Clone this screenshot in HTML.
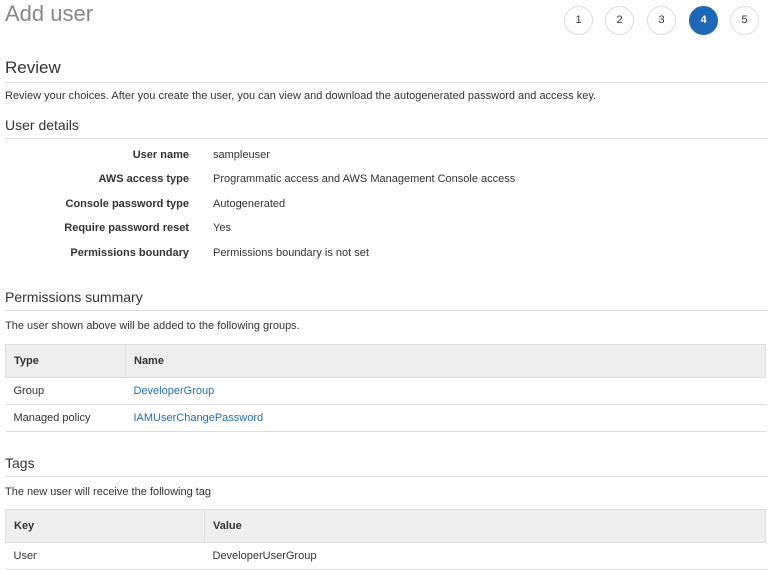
<!DOCTYPE html><html><head><style>
body{margin:0;width:768px;height:563px;overflow:hidden;background:#fff;font-family:"Liberation Sans",Arial,sans-serif;color:#333;position:relative}
.a{position:absolute;white-space:nowrap}
.h{font-size:17px;color:#333}
.ln{position:absolute;left:5px;right:0;height:1px;background:#ddd}
.t{font-size:11px}
.c{position:absolute;top:6px;width:27px;height:27px;border:1px solid #ddd;border-radius:50%;text-align:center;line-height:27px;font-size:11px;color:#333;background:#fff}
.lab{position:absolute;right:579px;font-size:11px;font-weight:bold;white-space:nowrap}
.val{position:absolute;left:213px;font-size:11px;white-space:nowrap}
table{position:absolute;left:5px;width:761px;border-collapse:collapse;font-size:11px}
th{background:#eee;text-align:left;font-weight:bold;padding:0 8px;height:32px;border:1px solid #ddd}
th+th{border-left:1px solid #ddd}
td{padding:0 8px;height:26px;border-bottom:1px solid #ddd}
a{color:#1f6fb2;text-decoration:none}
</style></head><body>
<div class="a" style="left:5px;top:1px;font-size:22px;color:#888">Add user</div>
<div class="c" style="left:564px">1</div>
<div class="c" style="left:605px">2</div>
<div class="c" style="left:647px">3</div>
<div class="c" style="left:689px;background:#1f68b7;border-color:#1f68b7;color:#fff;font-weight:bold">4</div>
<div class="c" style="left:730px">5</div>
<div class="a h" style="left:5px;top:58px">Review</div>
<div class="ln" style="top:82px"></div>
<div class="a t" style="left:5px;top:90px">Review your choices. After you create the user, you can view and download the autogenerated password and access key.</div>
<div class="a" style="left:5px;top:117px;font-size:14px">User details</div>
<div class="ln" style="top:138px"></div>
<div class="lab" style="top:149px">User name</div><div class="val" style="top:149px">sampleuser</div>
<div class="lab" style="top:173px">AWS access type</div><div class="val" style="top:173px">Programmatic access and AWS Management Console access</div>
<div class="lab" style="top:198px">Console password type</div><div class="val" style="top:198px">Autogenerated</div>
<div class="lab" style="top:222px">Require password reset</div><div class="val" style="top:222px">Yes</div>
<div class="lab" style="top:247px">Permissions boundary</div><div class="val" style="top:247px">Permissions boundary is not set</div>
<div class="a" style="left:5px;top:289px;font-size:14px">Permissions summary</div>
<div class="ln" style="top:310px"></div>
<div class="a t" style="left:5px;top:320px">The user shown above will be added to the following groups.</div>
<table style="top:344px"><tr><th style="width:103px">Type</th><th>Name</th></tr>
<tr><td>Group</td><td><a>DeveloperGroup</a></td></tr>
<tr><td>Managed policy</td><td><a>IAMUserChangePassword</a></td></tr></table>
<div class="a" style="left:5px;top:455px;font-size:14px">Tags</div>
<div class="ln" style="top:476px"></div>
<div class="a t" style="left:5px;top:486px">The new user will receive the following tag</div>
<table style="top:509px"><tr><th style="width:182px">Key</th><th>Value</th></tr>
<tr><td>User</td><td>DeveloperUserGroup</td></tr></table>
</body></html>
